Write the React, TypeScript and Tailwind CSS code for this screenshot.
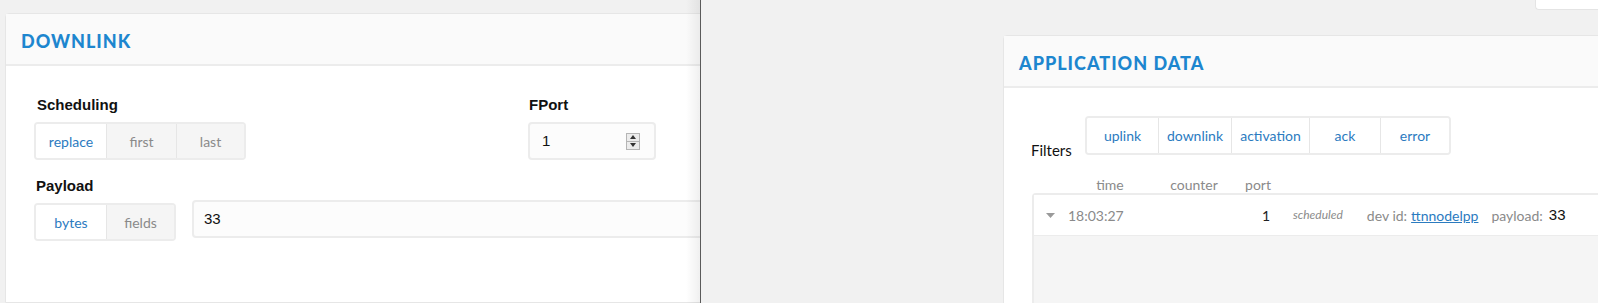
import React from "react";

const lato = { fontFamily: "Lato, 'Open Sans', sans-serif" };

function SegGroup({ items, active, widths }: { items: string[]; active: number[]; widths: number[] }) {
  return (
    <div className="flex h-[38px] rounded-[4px] border-2 border-[#ececec] overflow-hidden" style={lato}>
      {items.map((t, i) => (
        <div
          key={t}
          style={{ width: widths[i] }}
          className={
            "flex items-center justify-center text-[14px] " +
            (i > 0 ? "border-l border-[#e6e6e6] " : "") +
            (active.includes(i) ? "bg-white text-[#2b7bbf]" : "bg-[#f5f5f5] text-[#8a8a8a]")
          }
        >
          {t}
        </div>
      ))}
    </div>
  );
}

function Label({ children, className = "" }: { children: React.ReactNode; className?: string }) {
  return (
    <div
      className={"text-[15px] leading-[18px] font-bold text-[#111] " + className}
      style={{ fontFamily: "'Liberation Sans', Arial, sans-serif" }}
    >
      {children}
    </div>
  );
}

function Spinner() {
  return (
    <div className="w-[14px] h-[17px] border border-[#b5b5b5] bg-[#ececec] flex flex-col">
      <div className="flex-1 flex items-center justify-center border-b border-[#b5b5b5]">
        <svg width="6" height="4" viewBox="0 0 6 4">
          <path d="M0 4 L3 0 L6 4 Z" fill="#333" />
        </svg>
      </div>
      <div className="flex-1 flex items-center justify-center">
        <svg width="6" height="4" viewBox="0 0 6 4">
          <path d="M0 0 L3 4 L6 0 Z" fill="#333" />
        </svg>
      </div>
    </div>
  );
}

function CardHeader({ title }: { title: string }) {
  return (
    <div className="h-[52px] bg-[#fafafa] border-b-2 border-[#ececec] flex items-center pl-[15px] pt-[5px]">
      <span
        className="text-[18px] font-black uppercase tracking-[1px] text-[#1d86cf]"
        style={lato}
      >
        {title}
      </span>
    </div>
  );
}

export default function App() {
  return (
    <div className="w-[1598px] h-[303px] flex overflow-hidden bg-[#f1f1f1]">
      {/* Left window */}
      <div className="relative w-[700px] h-full overflow-hidden pl-[5px] pt-[13px] shrink-0">
        <div className="w-[780px] h-[290px] bg-white border border-[#e6e6e6] rounded-tl-[4px]">
          <CardHeader title="Downlink" />
          <div className="pl-[28px] pt-[30px]">
            <div className="flex">
              <div className="w-[494px]">
                <Label className="pl-[3px]">Scheduling</Label>
                <div className="mt-[8px] w-[212px]">
                  <SegGroup items={["replace", "first", "last"]} active={[0]} widths={[70, 70, 68]} />
                </div>
              </div>
              <div>
                <Label className="pl-[1px]">FPort</Label>
                <div className="mt-[8px] w-[128px] h-[38px] rounded-[4px] border-2 border-[#ececec] bg-[#fcfcfc] flex items-center pl-[12px] pr-[14px]">
                  <span
                    className="flex-1 text-[15px] text-[#111]"
                    style={{ fontFamily: "'Liberation Sans', Arial, sans-serif" }}
                  >
                    1
                  </span>
                  <Spinner />
                </div>
              </div>
            </div>
            <Label className="mt-[17px] pl-[2px]">Payload</Label>
            <div className="mt-[5px] flex items-start">
              <div className="mt-[3px] w-[142px]">
                <SegGroup items={["bytes", "fields"]} active={[0]} widths={[70, 68]} />
              </div>
              <div className="ml-[16px] flex-1 h-[38px] rounded-[4px] border-2 border-[#ececec] bg-[#fcfcfc] flex items-center pl-[10px]">
                <span
                  className="text-[15px] text-[#111]"
                  style={{ fontFamily: "'Liberation Sans', Arial, sans-serif" }}
                >
                  33
                </span>
              </div>
            </div>
          </div>
        </div>
        <div className="pointer-events-none absolute top-0 right-0 bottom-0 w-[14px] bg-gradient-to-r from-transparent to-black/[0.06]" />
      </div>
      <div className="w-[1px] h-full bg-[#5a5a5a] shrink-0" />

      {/* Right window */}
      <div className="flex-1 h-full overflow-hidden flex flex-col">
        <div className="h-[10px] flex justify-end shrink-0">
          <div className="w-[63px] h-[10px] bg-white border-l border-b border-[#e4e4e4] rounded-bl-[4px]" />
        </div>
        <div className="mt-[25px] ml-[302px] w-[640px] flex-1 bg-white border border-[#e6e6e6] rounded-tl-[4px]">
          <CardHeader title="Application Data" />
          <div className="pl-[27px] pt-[28px]" style={lato}>
            <div className="flex items-start">
              <div className="w-[54px] mt-[25px] text-[15px] leading-[18px] text-[#111]">Filters</div>
              <div className="flex h-[39px] rounded-[4px] border-2 border-[#ececec] overflow-hidden">
                {[
                  ["uplink", 71],
                  ["downlink", 73],
                  ["activation", 78],
                  ["ack", 71],
                  ["error", 69],
                ].map(([t, w], i) => (
                  <div
                    key={t as string}
                    style={{ width: w as number }}
                    className={
                      "flex items-center justify-center bg-white text-[14px] text-[#2b7bbf] " +
                      (i > 0 ? "border-l border-[#e6e6e6]" : "")
                    }
                  >
                    {t}
                  </div>
                ))}
              </div>
            </div>
            <div className="ml-[1px] mt-[17px] flex text-[14px] leading-[17px] text-[#8a8a8a]">
              <div className="w-[36px]" />
              <div className="w-[84px] text-center">time</div>
              <div className="w-[84px] text-center">counter</div>
              <div className="w-[44px] text-center">port</div>
            </div>
            <div className="ml-[1px] h-[120px] border-2 border-[#ececec] rounded-tl-[4px] bg-[#f5f5f5]">
              <div className="h-[41px] bg-white border-b border-[#ececec] flex items-center">
                <div className="w-[34px] pl-[12px] flex items-center">
                  <svg width="9" height="5" viewBox="0 0 9 5">
                    <path d="M0 0 L9 0 L4.5 5 Z" fill="#9a9a9a" />
                  </svg>
                </div>
                <div className="w-[84px] text-[14px] leading-[17px] text-[#8a8a8a]">18:03:27</div>
                <div className="w-[84px]" />
                <div className="w-[34px] text-right text-[14px] leading-[17px] text-[#222]">1</div>
                <div className="ml-[23px] text-[12px] italic text-[#8a8a8a]">scheduled</div>
                <div className="ml-[24px] text-[14px] text-[#8a8a8a]">dev id:</div>
                <div className="ml-[4px] text-[14px] text-[#2b7bbf] underline">ttnnodelpp</div>
                <div className="ml-[13px] text-[14px] text-[#8a8a8a]">payload:</div>
                <div
                  className="ml-[6px] text-[15px] text-[#111]"
                  style={{ fontFamily: "'Liberation Sans', Arial, sans-serif" }}
                >
                  33
                </div>
              </div>
            </div>
          </div>
        </div>
      </div>
    </div>
  );
}
